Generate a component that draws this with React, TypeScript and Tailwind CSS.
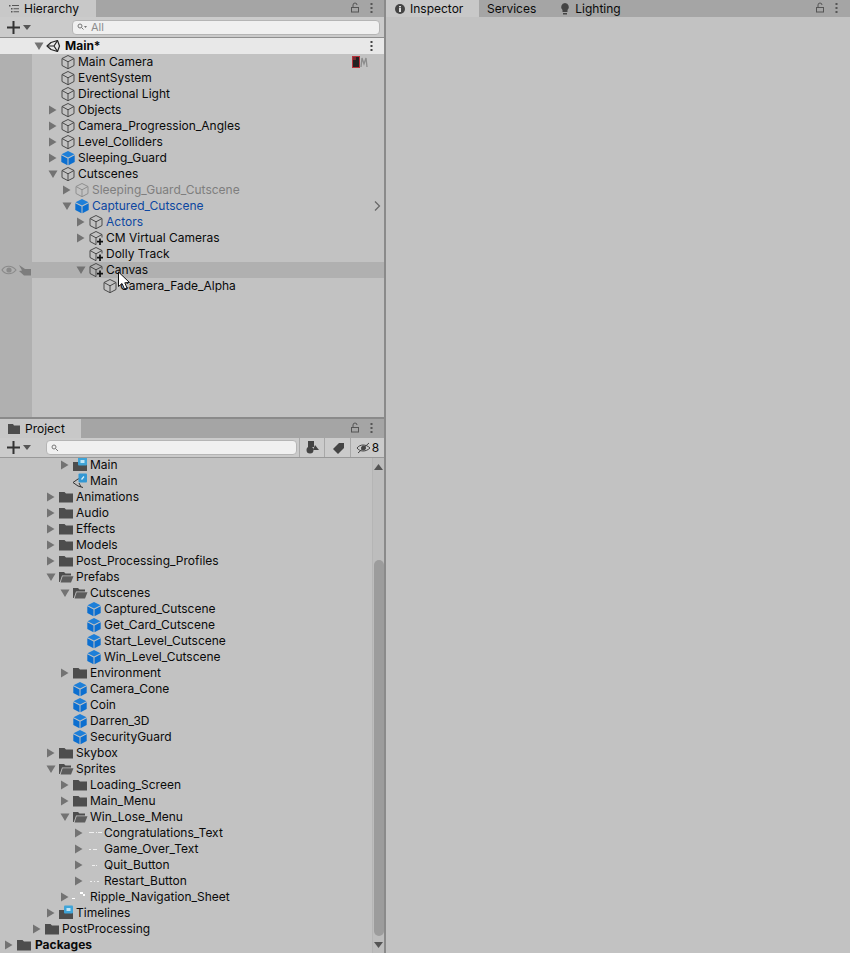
import React from "react";

const Cube = ({ c = "#4a4a4a" }: { c?: string }) => (
  <svg width="16" height="16" viewBox="0 0 16 16" fill="none" stroke={c} strokeWidth="1" strokeLinejoin="round">
    <path d="M8 1.5 14 4.5V11.5L8 14.7 2 11.5V4.5Z" />
    <path d="M2 4.5 8 7.8 14 4.5M8 7.8V14.7" />
  </svg>
);
const CubePlus = () => (
  <svg width="16" height="16" viewBox="0 0 16 16" fill="none" stroke="#4a4a4a" strokeWidth="1" strokeLinejoin="round">
    <path d="M8 1.5 14 4.5V7.5M8 14.7 2 11.5V4.5L8 1.5" />
    <path d="M2 4.5 8 7.8 14 4.5M8 7.8V14.7" />
    <path d="M12 8.5V15M9 11.7H15" stroke="#111" strokeWidth="1.7" />
  </svg>
);
const BlueCube = () => (
  <svg width="16" height="16" viewBox="0 0 16 16">
    <path d="M8 1 14.5 4.3 8 7.6 1.5 4.3Z" fill="#1e7fd8" />
    <path d="M1.3 5.3 7.5 8.5V15.2L1.3 12Z" fill="#0c6fd0" />
    <path d="M14.7 5.3 8.5 8.5V15.2L14.7 12Z" fill="#0c6fd0" />
  </svg>
);
const Folder = () => (
  <svg width="16" height="16" viewBox="0 0 16 16">
    <path d="M1 3H6.5L8 4.5H15V13.5H1Z" fill="#4d4d4d" />
  </svg>
);
const OpenFolder = () => (
  <svg width="16" height="16" viewBox="0 0 16 16">
    <path d="M1 3H6L7.5 4.5H13V6.5H4L1.8 13H1Z" fill="#4d4d4d" />
    <path d="M4.6 7.3H15.5L13 13.5H2.6Z" fill="#5c5c5c" />
  </svg>
);
const BlueFolder = () => (
  <svg width="16" height="16" viewBox="0 0 16 16">
    <path d="M1 5H15V14H1Z" fill="#4d4d4d" />
    <rect x="6" y="0.5" width="9" height="8" rx="1" fill="#3fa4d8" />
    <rect x="8.5" y="3" width="4" height="3" fill="#bfe6f8" />
  </svg>
);
const SceneBlue = () => (
  <svg width="16" height="16" viewBox="0 0 16 16" fill="none">
    <path d="M1 9.5 6 6M1 9.5 6 13M6 13 11 14.5M6 6 10 5M7 10 9 14" stroke="#333" />
    <rect x="6.5" y="0.5" width="8.5" height="9" rx="1" fill="#3297d3" />
    <path d="M9.5 6.5 12 3.5" stroke="#d9f1fb" strokeWidth="1.2" />
  </svg>
);
const Unity = () => (
  <svg width="16" height="16" viewBox="0 0 16 16" fill="none" stroke="#222" strokeWidth="1.2" strokeLinejoin="round">
    <path d="M1 8 5 4.5 11.5 2.5 13.5 8 11.5 13.5 5 11.5Z" />
    <path d="M1 8H8L11.5 2.5M8 8 11.5 13.5" />
  </svg>
);
const Lock = () => (
  <svg className="mb-[2px]" width="10" height="11" viewBox="0 0 10 11" fill="none" stroke="#555" strokeWidth="1">
    <rect x="1.5" y="5.5" width="7" height="4.5" />
    <path d="M3 5.5V3a2 2 0 0 1 4 0" />
  </svg>
);
const Kebab = ({ c = "#555" }: { c?: string }) => (
  <svg className="mb-[1px]" width="3" height="10" viewBox="0 0 3 10" fill={c}>
    <rect x="0.5" y="0" width="2" height="2" />
    <rect x="0.5" y="4" width="2" height="2" />
    <rect x="0.5" y="8" width="2" height="2" />
  </svg>
);
const Plus = () => (
  <div className="flex items-center gap-[3px]">
    <svg width="13" height="13" viewBox="0 0 13 13" fill="#333"><path d="M5.5 0H7.5V5.5H13V7.5H7.5V13H5.5V7.5H0V5.5H5.5Z" /></svg>
    <svg width="8" height="5" viewBox="0 0 8 5" fill="#555"><path d="M0 0H8L4 5Z" /></svg>
  </div>
);
const Arrow = ({ kind }: { kind: "r" | "d" }) => (
  <svg width="14" height="16" viewBox="0 0 14 16" fill="#737373">
    {kind === "d" ? <path d="M2.5 4.5H11.5L7 12Z" /> : <path d="M3 3.5 10.5 8 3 12.5Z" />}
  </svg>
);
const Sprite = ({ v }: { v: number }) => (
  <svg width="16" height="16" viewBox="0 0 16 16" fill="#fff" fillOpacity="0.75">
    {v === 0 && <path d="M3 7H8V8H3ZM10 7H11V8H10ZM12 7H16V8H12Z" />}
    {v === 1 && <path d="M3 8H5V9H3ZM7 8H11V9H7Z" />}
    {v === 2 && <path d="M6 8H9V9H6ZM10 8H11V9H10Z" />}
    {v === 3 && <path d="M4 8H6V9H4ZM8 8H9V9H8ZM11 8H13V9H11Z" />}
    {v === 4 && <path d="M0 9H3V10H0ZM8 3H11V5H13V7H11V5H8Z" fillOpacity="1" />}
  </svg>
);

type R = {
  t: string;
  d: number;
  a?: "r" | "d";
  i: React.ReactNode;
  cls?: string;
};
const Row = ({ r, base }: { r: R; base: number }) => (
  <div className={`flex h-4 items-center ${r.cls ?? ""}`} style={{ paddingLeft: base + 14 * r.d }}>
    <div className="h-4 w-[14px] shrink-0">{r.a && <Arrow kind={r.a} />}</div>
    <div className="h-4 w-4 shrink-0">{r.i}</div>
    <span className="ml-[2px] whitespace-nowrap">{r.t}</span>
  </div>
);

const hier: R[] = [
  { t: "Main Camera", d: 0, i: <Cube /> },
  { t: "EventSystem", d: 0, i: <Cube /> },
  { t: "Directional Light", d: 0, i: <Cube /> },
  { t: "Objects", d: 0, a: "r", i: <Cube /> },
  { t: "Camera_Progression_Angles", d: 0, a: "r", i: <Cube /> },
  { t: "Level_Colliders", d: 0, a: "r", i: <Cube /> },
  { t: "Sleeping_Guard", d: 0, a: "r", i: <BlueCube /> },
  { t: "Cutscenes", d: 0, a: "d", i: <Cube /> },
  { t: "Sleeping_Guard_Cutscene", d: 1, a: "r", i: <Cube c="#8f8f8f" />, cls: "text-[#7e7e7e]" },
  { t: "Captured_Cutscene", d: 1, a: "d", i: <BlueCube />, cls: "text-[#0d47a1]" },
  { t: "Actors", d: 2, a: "r", i: <Cube />, cls: "text-[#0d47a1]" },
  { t: "CM Virtual Cameras", d: 2, a: "r", i: <CubePlus /> },
  { t: "Dolly Track", d: 2, i: <CubePlus /> },
  { t: "Canvas", d: 2, a: "d", i: <CubePlus />, cls: "bg-[#b0b0b0]" },
  { t: "Camera_Fade_Alpha", d: 3, i: <Cube /> },
];

const proj: R[] = [
  { t: "Main", d: 4, a: "r", i: <BlueFolder /> },
  { t: "Main", d: 4, i: <SceneBlue /> },
  { t: "Animations", d: 3, a: "r", i: <Folder /> },
  { t: "Audio", d: 3, a: "r", i: <Folder /> },
  { t: "Effects", d: 3, a: "r", i: <Folder /> },
  { t: "Models", d: 3, a: "r", i: <Folder /> },
  { t: "Post_Processing_Profiles", d: 3, a: "r", i: <Folder /> },
  { t: "Prefabs", d: 3, a: "d", i: <OpenFolder /> },
  { t: "Cutscenes", d: 4, a: "d", i: <OpenFolder /> },
  { t: "Captured_Cutscene", d: 5, i: <BlueCube /> },
  { t: "Get_Card_Cutscene", d: 5, i: <BlueCube /> },
  { t: "Start_Level_Cutscene", d: 5, i: <BlueCube /> },
  { t: "Win_Level_Cutscene", d: 5, i: <BlueCube /> },
  { t: "Environment", d: 4, a: "r", i: <Folder /> },
  { t: "Camera_Cone", d: 4, i: <BlueCube /> },
  { t: "Coin", d: 4, i: <BlueCube /> },
  { t: "Darren_3D", d: 4, i: <BlueCube /> },
  { t: "SecurityGuard", d: 4, i: <BlueCube /> },
  { t: "Skybox", d: 3, a: "r", i: <Folder /> },
  { t: "Sprites", d: 3, a: "d", i: <OpenFolder /> },
  { t: "Loading_Screen", d: 4, a: "r", i: <Folder /> },
  { t: "Main_Menu", d: 4, a: "r", i: <Folder /> },
  { t: "Win_Lose_Menu", d: 4, a: "d", i: <OpenFolder /> },
  { t: "Congratulations_Text", d: 5, a: "r", i: <Sprite v={0} /> },
  { t: "Game_Over_Text", d: 5, a: "r", i: <Sprite v={1} /> },
  { t: "Quit_Button", d: 5, a: "r", i: <Sprite v={2} /> },
  { t: "Restart_Button", d: 5, a: "r", i: <Sprite v={3} /> },
  { t: "Ripple_Navigation_Sheet", d: 4, a: "r", i: <Sprite v={4} /> },
  { t: "Timelines", d: 3, a: "r", i: <BlueFolder /> },
  { t: "PostProcessing", d: 2, a: "r", i: <Folder /> },
  { t: "Packages", d: 0, a: "r", i: <Folder />, cls: "font-bold [&>span]:pl-[1px]" },
];

export default function App() {
  return (
    <div className="flex h-[953px] w-[850px] overflow-hidden bg-[#c2c2c2] font-['Inter','Liberation_Sans',sans-serif] text-[12px] leading-4 text-[#0a0a0a]">
      <div className="flex w-[384px] shrink-0 flex-col">
        {/* Hierarchy */}
        <div className="flex h-[417px] shrink-0 flex-col">
          <div className="flex h-[17px] shrink-0 items-center bg-[#a5a5a5]">
            <div className="flex h-full w-[96px] items-center gap-[5px] bg-[#c8c8c8] pl-[9px]">
              <svg width="10" height="8" viewBox="0 0 10 8" fill="#555"><path d="M0 0H1.5V1.5H0ZM3 0H10V1H3ZM2 3H3.5V4.5H2ZM4.5 3.2H10V4.2H4.5ZM2 6H3.5V7.5H2ZM4.5 6.3H10V7.3H4.5Z" /></svg>
              <span>Hierarchy</span>
            </div>
            <div className="ml-auto flex items-center gap-[10px] pr-[11px]"><Lock /><Kebab /></div>
          </div>
          <div className="flex h-[21px] shrink-0 items-center border-b border-[#8f8f8f] bg-[#cbcbcb] pl-[7px]">
            <Plus />
            <div className="ml-[41px] flex h-[15px] w-[308px] items-center gap-[4px] rounded-[4px] border border-[#b5b5b5] bg-[#f0f0f0] pl-[4px] text-[11px] text-[#8c8c8c]">
              <svg width="10" height="8" viewBox="0 0 10 8" fill="none" stroke="#777"><circle cx="3" cy="3" r="2" /><path d="M4.5 4.5 6.5 6.5" /><path d="M7 3H10L8.5 5Z" fill="#777" stroke="none" /></svg>
              All
            </div>
          </div>
          <div className="relative flex-1 overflow-hidden bg-[linear-gradient(to_right,#b0b0b0_32px,#c2c2c2_32px)]">
            <div className="flex h-4 items-center justify-between bg-[#e8e8e8] pl-[32px] pr-[11px]">
              <div className="flex items-center">
                <div className="h-4 w-[14px]"><Arrow kind="d" /></div>
                <div className="h-4 w-4"><Unity /></div>
                <span className="ml-[3px] font-bold">Main*</span>
              </div>
              <Kebab c="#444" />
            </div>
            {hier.map((r, i) => (
              <Row key={i} r={r} base={46} />
            ))}
            {/* row adornments */}
            <svg className="absolute left-[351px] top-[17px]" width="18" height="14" viewBox="0 0 18 14">
              <rect x="1.5" y="1.5" width="7" height="11" fill="#222" stroke="#b5323a" />
              <rect x="2" y="2" width="3" height="3" fill="#7a2a30" />
              <path d="M10 12 11 3 13 9 15 3 16 12" stroke="#8c8c8c" fill="none" strokeWidth="1.3" />
            </svg>
            <svg className="absolute left-[373px] top-[162px]" width="8" height="12" viewBox="0 0 8 12" fill="none" stroke="#666" strokeWidth="1.2">
              <path d="M2 1.5 6.5 6 2 10.5" />
            </svg>
            <svg className="absolute left-[1px] top-[225px]" width="32" height="14" viewBox="0 0 32 14">
              <path d="M1 7C4 2 11 2 15 7 11 12 4 12 1 7Z" fill="none" stroke="#8a8a8a" strokeWidth="1.2" />
              <circle cx="8" cy="7" r="2.6" fill="#8a8a8a" />
              <path d="M18 2 24 6H30V12.5H23L18 8 21 7.5Z" fill="#7d7d7d" />
            </svg>
            <svg className="absolute left-[117px] top-[233px]" width="15" height="20" viewBox="0 0 15 20">
              <path d="M1.5 1 V15.5 L5 12.5 L7.5 18 L10 17 L7.8 11.8 L12.5 11.5 Z" fill="#fff" stroke="#111" strokeWidth="1" />
            </svg>
          </div>
        </div>
        {/* Project */}
        <div className="flex min-h-0 flex-1 flex-col border-t-2 border-[#8a8a8a]">
          <div className="flex h-[19px] shrink-0 items-center bg-[#a5a5a5]">
            <div className="flex h-full w-[81px] items-center gap-[5px] bg-[#c8c8c8] pl-[8px] pt-[1px]">
              <svg width="12" height="10" viewBox="0 0 12 10" fill="#4d4d4d"><path d="M0 0H5L6 1.5H12V10H0Z" /></svg>
              <span>Project</span>
            </div>
            <div className="ml-auto flex items-center gap-[10px] pr-[11px]"><Lock /><Kebab /></div>
          </div>
          <div className="flex h-[20px] shrink-0 items-center border-b border-[#999] bg-[#cbcbcb] pl-[7px]">
            <Plus />
            <div className="ml-[15px] flex h-[15px] w-[251px] items-center rounded-[4px] border border-[#b5b5b5] bg-[#f0f0f0] pl-[4px]">
              <svg width="8" height="8" viewBox="0 0 8 8" fill="none" stroke="#777"><circle cx="3" cy="3" r="2" /><path d="M4.5 4.5 7 7" /></svg>
            </div>
            <div className="ml-[2px] flex h-full flex-1 items-center">
              <div className="flex h-full w-[26px] items-center justify-center border-x border-[#a8a8a8]">
                <svg width="13" height="13" viewBox="0 0 13 13" fill="#444"><rect x="2" y="0" width="6" height="6" /><circle cx="4" cy="9" r="3.5" /><path d="M9 4 13 9H7Z" /></svg>
              </div>
              <div className="flex h-full w-[26px] items-center justify-center border-r border-[#a8a8a8]">
                <svg width="12" height="12" viewBox="0 0 12 12" fill="#444"><path d="M1 7 7 1H12V6L6 12Z" /></svg>
              </div>
              <div className="flex flex-1 items-center justify-center gap-[1px] text-[12px]">
                <svg width="15" height="12" viewBox="0 0 15 12" fill="none" stroke="#444"><path d="M1 6C4 2 10 2 14 6 10 10 4 10 1 6Z" /><circle cx="7.5" cy="6" r="2" fill="#444" /><path d="M2 11 13 1" /></svg>
                <span>8</span>
              </div>
            </div>
          </div>
          <div className="flex min-h-0 flex-1 overflow-hidden">
            <div className="-mt-[1px] min-w-0 flex-1">
              {proj.map((r, i) => (
                <Row key={i} r={r} base={2} />
              ))}
            </div>
            <div className="flex w-[12px] shrink-0 flex-col items-center border-l border-[#b5b5b5] bg-[#bdbdbd]">
              <div className="flex h-[14px] items-center justify-center pt-[4px]">
                <svg width="9" height="6" viewBox="0 0 9 6" fill="#555"><path d="M4.5 0 9 6H0Z" /></svg>
              </div>
              <div className="mt-[88px] h-[376px] w-[10px] rounded-[5px] bg-[#9c9c9c]" />
              <div className="mt-auto flex h-[14px] items-center justify-center pb-[2px]">
                <svg width="9" height="6" viewBox="0 0 9 6" fill="#555"><path d="M0 0H9L4.5 6Z" /></svg>
              </div>
            </div>
          </div>
        </div>
      </div>
      {/* Divider */}
      <div className="w-[2px] shrink-0 bg-[#8a8a8a]" />
      {/* Inspector */}
      <div className="flex min-w-0 flex-1 flex-col">
        <div className="flex h-[17px] shrink-0 items-center bg-[#a5a5a5]">
          <div className="flex h-full w-[93px] items-center gap-[5px] bg-[#c8c8c8] pl-[9px]">
            <svg width="10" height="10" viewBox="0 0 10 10"><circle cx="5" cy="5" r="5" fill="#444" /><rect x="4" y="4" width="2" height="4" fill="#ddd" /><rect x="4" y="2" width="2" height="1.4" fill="#ddd" /></svg>
            <span>Inspector</span>
          </div>
          <span className="ml-[8px]">Services</span>
          <svg className="ml-[24px]" width="10" height="12" viewBox="0 0 10 12" fill="#444"><path d="M5 0a4 4 0 0 1 2.5 7V9h-5V7A4 4 0 0 1 5 0ZM3 10H7V11.5H3Z" /></svg>
          <span className="ml-[5px]">Lighting</span>
          <div className="ml-auto flex items-center gap-[10px] pr-[12px]"><Lock /><Kebab /></div>
        </div>
        <div className="flex-1 bg-[#c2c2c2]" />
      </div>
    </div>
  );
}
